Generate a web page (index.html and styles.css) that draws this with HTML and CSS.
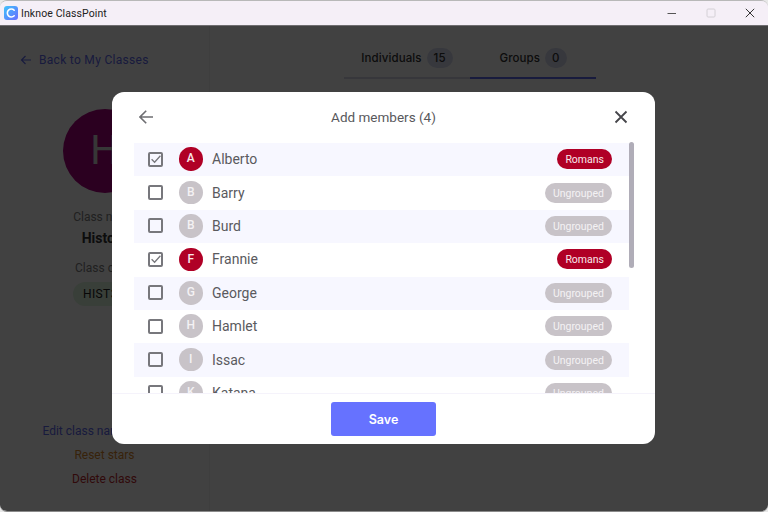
FILE: index.html
```html
<!DOCTYPE html>
<html lang="en">
<head>
    <meta charset="UTF-8">
    <meta name="viewport" content="width=device-width, initial-scale=1.0">
    <title>Inknoe ClassPoint</title>
    <link rel="stylesheet" href="styles.css">
</head>
<body>
    <div class="window">

        <!-- Title bar -->
        <div class="titlebar">
            <svg class="app-logo" width="14" height="14" viewBox="0 0 14 14">
                <defs>
                    <linearGradient id="logoFill" x1="0" y1="0" x2="1" y2="1">
                        <stop offset="0" stop-color="#3fc4fb"/>
                        <stop offset="1" stop-color="#6a6cff"/>
                    </linearGradient>
                </defs>
                <rect width="14" height="14" rx="3" fill="url(#logoFill)"/>
                <path d="M10.2 4.2A4 4 0 1 0 10.2 9.8" fill="none" stroke="#fff" stroke-width="1.6" stroke-linecap="round"/>
            </svg>
            <span class="app-name">Inknoe ClassPoint</span>
            <div class="window-controls">
                <svg class="win-btn" width="10" height="10" viewBox="0 0 10 10"><path d="M0.5 5.5H9" stroke="#555" stroke-width="1"/></svg>
                <svg class="win-btn" width="10" height="10" viewBox="0 0 10 10"><rect x="1" y="1" width="8" height="8" rx="1" fill="none" stroke="#d4d0d6" stroke-width="1"/></svg>
                <svg class="win-btn" width="10" height="10" viewBox="0 0 10 10"><path d="M0.8 0.8L9.2 9.2M9.2 0.8L0.8 9.2" stroke="#333" stroke-width="1"/></svg>
            </div>
        </div>

        <div class="app">

            <!-- Class details -->
            <aside class="side">
                <a class="back-link">
                    <svg width="12" height="12" viewBox="0 0 12 12"><path d="M11 6H1.5M5.5 2L1.5 6L5.5 10" fill="none" stroke="#5f6af0" stroke-width="1.2"/></svg>
                    Back to My Classes
                </a>
                <div class="class-avatar">H</div>
                <div class="side-label">Class name</div>
                <div class="class-name">History</div>
                <div class="side-label code-label">Class code</div>
                <div class="class-code">HIST3A</div>
                <div class="side-actions">
                    <a class="action-edit">Edit class name &amp; code</a>
                    <a class="action-reset">Reset stars</a>
                    <a class="action-delete">Delete class</a>
                </div>
            </aside>

            <!-- Tabs -->
            <main class="main">
                <div class="tabs">
                    <div class="tab">Individuals <span class="tab-count">15</span></div>
                    <div class="tab tab-active">Groups <span class="tab-count">0</span></div>
                </div>
            </main>

            <!-- Add members dialog -->
            <div class="overlay">
                <div class="dialog">
                    <div class="dialog-head">
                        <svg width="14" height="14" viewBox="0 0 14 14"><path d="M14 7H1M7.2 0.8L1 7L7.2 13.2" fill="none" stroke="#6e6e72" stroke-width="1.6"/></svg>
                        <span class="dialog-title">Add members (4)</span>
                        <svg width="14" height="14" viewBox="0 0 14 14"><path d="M1.5 1.5L12.5 12.5M12.5 1.5L1.5 12.5" fill="none" stroke="#45454a" stroke-width="1.8"/></svg>
                    </div>
                    <div class="member-scroll">
                        <ul class="member-list" id="memberList"></ul>
                        <div class="scroll-thumb"></div>
                    </div>
                    <div class="dialog-foot">
                        <button class="save-btn">Save</button>
                    </div>
                </div>
            </div>

        </div>
    </div>

    <script>
        const members = [
            { name: 'Alberto', group: 'Romans' },
            { name: 'Barry' },
            { name: 'Burd' },
            { name: 'Frannie', group: 'Romans' },
            { name: 'George' },
            { name: 'Hamlet' },
            { name: 'Issac' },
            { name: 'Katana' }
        ];

        const tick = '<svg width="12" height="12" viewBox="0 0 12 12"><path d="M1.6 6.2L4.6 9.2L10.4 2.8" fill="none" stroke="#77777c" stroke-width="1.3"/></svg>';

        document.getElementById('memberList').innerHTML = members.map(m => `
            <li class="member ${m.group ? 'in-group' : ''}">
                <span class="check">${m.group ? tick : ''}</span>
                <span class="avatar">${m.name[0]}</span>
                <span class="member-name">${m.name}</span>
                <span class="group-pill">${m.group || 'Ungrouped'}</span>
            </li>`).join('');
    </script>
</body>
</html>
```

FILE: styles.css
```css
* {
    box-sizing: border-box;
}
body {
    margin: 0;
    background-color: #e8e8e8;
    font-family: Roboto, "Liberation Sans", sans-serif;
}
.window {
    width: 768px;
    height: 512px;
    display: flex;
    flex-direction: column;
    border-top: 1px solid #b8b8b8;
    border-bottom: 1px solid #8a8a8a;
    border-radius: 7px;
    overflow: hidden;
}
.titlebar {
    height: 25px;
    flex-shrink: 0;
    display: flex;
    align-items: center;
    padding-left: 4px;
    background-color: #f5eff7;
    border-bottom: 1px solid #6f6d70;
}
.app-logo {
    margin-right: 3px;
}
.app-name {
    font-size: 10.5px;
    letter-spacing: 0.1px;
    color: #222;
}
.window-controls {
    margin-left: auto;
    display: flex;
    gap: 29px;
    padding-right: 13px;
}

/* page under the dialog */
.app {
    flex: 1;
    position: relative;
    display: flex;
    background-color: #fff;
}
.side {
    width: 210px;
    display: flex;
    flex-direction: column;
    align-items: center;
    padding-top: 27px;
    border-right: 1px solid #f2f2f2;
}
.back-link {
    align-self: flex-start;
    display: flex;
    align-items: center;
    gap: 7px;
    margin-left: 20px;
    font-size: 12px;
    letter-spacing: 0.3px;
    color: #5f6af0;
}
.class-avatar {
    width: 84px;
    height: 84px;
    margin-top: 42px;
    border-radius: 50%;
    background-color: #a8007e;
    color: #d8d8d8;
    font-size: 40px;
    line-height: 84px;
    text-align: center;
}
.side-label {
    margin-top: 17px;
    font-size: 12px;
    color: #808080;
}
.class-name {
    margin-top: 6px;
    font-size: 14px;
    font-weight: 700;
    color: #333;
}
.code-label {
    margin-top: 15px;
}
.class-code {
    margin-top: 7px;
    height: 24px;
    padding: 0 10px;
    border-radius: 12px;
    background-color: #dff5df;
    font-size: 12px;
    line-height: 24px;
    letter-spacing: 0.4px;
    color: #222;
}
.side-actions {
    margin-top: 118px;
    display: flex;
    flex-direction: column;
    align-items: center;
    gap: 10px;
    font-size: 12px;
    line-height: 14px;
}
.action-edit {
    color: #5f6af0;
}
.action-reset {
    color: #d9862a;
}
.action-delete {
    color: #c0272d;
}
.main {
    flex: 1;
    padding: 22px 0 0 134px;
}
.tabs {
    display: flex;
    width: 252px;
}
.tab {
    width: 126px;
    height: 31px;
    display: flex;
    justify-content: center;
    align-items: flex-start;
    gap: 5px;
    border-bottom: 2px solid #d8d8e8;
    font-family: Inter, sans-serif;
    font-size: 11.5px;
    font-weight: 500;
    line-height: 20px;
    letter-spacing: 0.1px;
    color: #333;
}
.tab-active {
    border-bottom-color: #5f6af0;
}
.tab-count {
    min-width: 20px;
    height: 20px;
    padding: 0 7px;
    border-radius: 10px;
    background-color: #d8dbf0;
    text-align: center;
}

/* dialog */
.overlay {
    position: absolute;
    top: 0;
    right: 0;
    bottom: 0;
    left: 0;
    display: flex;
    justify-content: center;
    align-items: center;
    padding: 0 1px 1px 0;
    background-color: rgba(0, 0, 0, 0.745);
}
.dialog {
    width: 543px;
    height: 352px;
    display: flex;
    flex-direction: column;
    border-radius: 12px;
    background-color: #fff;
    overflow: hidden;
}
.dialog-head {
    height: 50px;
    flex-shrink: 0;
    display: flex;
    justify-content: space-between;
    align-items: center;
    padding: 0 27px;
}
.dialog-title {
    font-size: 13.5px;
    color: #58585c;
}
.member-scroll {
    position: relative;
    flex: 1;
    padding: 1px 0 0 22px;
    overflow: hidden;
}
.member-list {
    list-style: none;
    width: 495px;
    margin: 0;
    padding: 0;
}
.member {
    height: 33.4px;
    display: flex;
    align-items: center;
    padding: 0 17px 1px 14px;
}
.member:nth-child(odd) {
    background-color: #f7f7ff;
}
.check {
    width: 15px;
    height: 15px;
    display: flex;
    align-items: center;
    justify-content: center;
    border: 2px solid #77777c;
    border-radius: 2px;
    margin-right: 16px;
}
.check svg {
    flex-shrink: 0;
}
.avatar {
    width: 23.5px;
    height: 23.5px;
    margin-right: 9.5px;
    border-radius: 50%;
    background-color: #c8c3c8;
    color: #f4f2f4;
    font-size: 12px;
    font-weight: 500;
    line-height: 23.5px;
    text-align: center;
}
.member-name {
    flex: 1;
    font-size: 14px;
    color: #5a5a5e;
}
.group-pill {
    height: 20px;
    padding: 0 8px;
    border-radius: 10px;
    background-color: #c8c3c8;
    color: #f4f2f4;
    font-size: 10.5px;
    line-height: 21px;
}
.in-group .avatar,
.in-group .group-pill {
    background-color: #b00026;
    color: #f8e8ea;
}
.scroll-thumb {
    position: absolute;
    top: 0;
    left: 517px;
    width: 5px;
    height: 126px;
    border-radius: 3px;
    background-color: #b0adb8;
}
.dialog-foot {
    height: 51px;
    flex-shrink: 0;
    display: flex;
    justify-content: center;
    align-items: flex-start;
    padding-top: 8px;
    border-top: 1px solid #f5f3fb;
}
.save-btn {
    width: 105px;
    height: 34px;
    border: none;
    border-radius: 3px;
    background-color: #6672ff;
    color: #fff;
    font-family: Inter, sans-serif;
    font-size: 12.5px;
    font-weight: 600;
    cursor: pointer;
}
```
